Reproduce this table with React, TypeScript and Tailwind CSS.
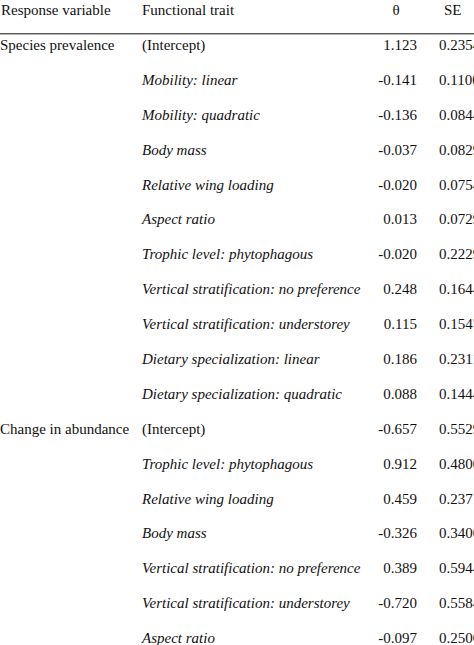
import React from "react";

type Row = { resp?: string; trait: string; italic: boolean; theta: string; se: string };

const rows: Row[] = [
  { resp: "Species prevalence", trait: "(Intercept)", italic: false, theta: "1.123", se: "0.2354" },
  { trait: "Mobility: linear", italic: true, theta: "-0.141", se: "0.1100" },
  { trait: "Mobility: quadratic", italic: true, theta: "-0.136", se: "0.0844" },
  { trait: "Body mass", italic: true, theta: "-0.037", se: "0.0829" },
  { trait: "Relative wing loading", italic: true, theta: "-0.020", se: "0.0754" },
  { trait: "Aspect ratio", italic: true, theta: "0.013", se: "0.0729" },
  { trait: "Trophic level: phytophagous", italic: true, theta: "-0.020", se: "0.2229" },
  { trait: "Vertical stratification: no preference", italic: true, theta: "0.248", se: "0.1644" },
  { trait: "Vertical stratification: understorey", italic: true, theta: "0.115", se: "0.1547" },
  { trait: "Dietary specialization: linear", italic: true, theta: "0.186", se: "0.2311" },
  { trait: "Dietary specialization: quadratic", italic: true, theta: "0.088", se: "0.1444" },
  { resp: "Change in abundance", trait: "(Intercept)", italic: false, theta: "-0.657", se: "0.5529" },
  { trait: "Trophic level: phytophagous", italic: true, theta: "0.912", se: "0.4800" },
  { trait: "Relative wing loading", italic: true, theta: "0.459", se: "0.2371" },
  { trait: "Body mass", italic: true, theta: "-0.326", se: "0.3400" },
  { trait: "Vertical stratification: no preference", italic: true, theta: "0.389", se: "0.5944" },
  { trait: "Vertical stratification: understorey", italic: true, theta: "-0.720", se: "0.5584" },
  { trait: "Aspect ratio", italic: true, theta: "-0.097", se: "0.2500" },
];

export default function App() {
  return (
    <div className="w-[474px] h-[645px] overflow-hidden bg-white text-[#111] text-[15px] font-['Liberation_Serif','Times_New_Roman',serif]">
      <div className="flex h-[33px] leading-[20px] whitespace-nowrap">
        <div className="w-[142px] shrink-0 pl-px">Response variable</div>
        <div className="w-[233px] shrink-0">Functional trait</div>
        <div className="w-[42px] shrink-0 text-center">θ</div>
        <div className="shrink-0 pl-[27px]">SE</div>
      </div>
      <div className="h-px w-full bg-[#5a5a5a]" />
      <div className="h-px w-full bg-[#b4b4b4]" />
      <div className="flex flex-col">
        {rows.map((r, i) => (
          <div key={i} className="flex h-[34.9px] shrink-0 leading-[20px] whitespace-nowrap">
            <div className="w-[142px] shrink-0">{r.resp ?? ""}</div>
            <div className={"w-[233px] shrink-0" + (r.italic ? " italic" : "")}>{r.trait}</div>
            <div className="w-[42px] shrink-0 text-right">{r.theta}</div>
            <div className="shrink-0 pl-[22px]">{r.se}</div>
          </div>
        ))}
      </div>
    </div>
  );
}
